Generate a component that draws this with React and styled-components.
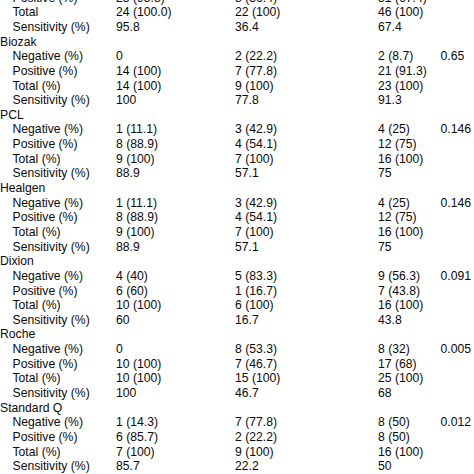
import React from "react";
import styled, { createGlobalStyle } from "styled-components";

const groups = [
  {
    name: null,
    rows: [
      { label: "Positive (%)", values: ["23 (95.8)", "8 (36.4)", "31 (67.4)"] },
      { label: "Total", values: ["24 (100.0)", "22 (100)", "46 (100)"] },
      { label: "Sensitivity (%)", values: ["95.8", "36.4", "67.4"] },
    ],
  },
  {
    name: "Biozak",
    p: "0.65",
    rows: [
      { label: "Negative (%)", values: ["0", "2 (22.2)", "2 (8.7)"] },
      { label: "Positive (%)", values: ["14 (100)", "7 (77.8)", "21 (91.3)"] },
      { label: "Total (%)", values: ["14 (100)", "9 (100)", "23 (100)"] },
      { label: "Sensitivity (%)", values: ["100", "77.8", "91.3"] },
    ],
  },
  {
    name: "PCL",
    p: "0.146",
    rows: [
      { label: "Negative (%)", values: ["1 (11.1)", "3 (42.9)", "4 (25)"] },
      { label: "Positive (%)", values: ["8 (88.9)", "4 (54.1)", "12 (75)"] },
      { label: "Total (%)", values: ["9 (100)", "7 (100)", "16 (100)"] },
      { label: "Sensitivity (%)", values: ["88.9", "57.1", "75"] },
    ],
  },
  {
    name: "Healgen",
    p: "0.146",
    rows: [
      { label: "Negative (%)", values: ["1 (11.1)", "3 (42.9)", "4 (25)"] },
      { label: "Positive (%)", values: ["8 (88.9)", "4 (54.1)", "12 (75)"] },
      { label: "Total (%)", values: ["9 (100)", "7 (100)", "16 (100)"] },
      { label: "Sensitivity (%)", values: ["88.9", "57.1", "75"] },
    ],
  },
  {
    name: "Dixion",
    p: "0.091",
    rows: [
      { label: "Negative (%)", values: ["4 (40)", "5 (83.3)", "9 (56.3)"] },
      { label: "Positive (%)", values: ["6 (60)", "1 (16.7)", "7 (43.8)"] },
      { label: "Total (%)", values: ["10 (100)", "6 (100)", "16 (100)"] },
      { label: "Sensitivity (%)", values: ["60", "16.7", "43.8"] },
    ],
  },
  {
    name: "Roche",
    p: "0.005",
    rows: [
      { label: "Negative (%)", values: ["0", "8 (53.3)", "8 (32)"] },
      { label: "Positive (%)", values: ["10 (100)", "7 (46.7)", "17 (68)"] },
      { label: "Total (%)", values: ["10 (100)", "15 (100)", "25 (100)"] },
      { label: "Sensitivity (%)", values: ["100", "46.7", "68"] },
    ],
  },
  {
    name: "Standard Q",
    p: "0.012",
    rows: [
      { label: "Negative (%)", values: ["1 (14.3)", "7 (77.8)", "8 (50)"] },
      { label: "Positive (%)", values: ["6 (85.7)", "2 (22.2)", "8 (50)"] },
      { label: "Total (%)", values: ["7 (100)", "9 (100)", "16 (100)"] },
      { label: "Sensitivity (%)", values: ["85.7", "22.2", "50"] },
    ],
  },
];

const App = () => {
  return (
    <>
      <GlobalStyle />
      <Table>
        {groups.map((group, gi) => (
          <React.Fragment key={gi}>
            {group.name && <GroupName>{group.name}</GroupName>}
            {group.rows.map((row, ri) => (
              <Row key={ri}>
                <Label>{row.label}</Label>
                {row.values.map((v, vi) => (
                  <Cell key={vi}>{v}</Cell>
                ))}
                <Cell>{ri === 0 && group.p ? group.p : ""}</Cell>
              </Row>
            ))}
          </React.Fragment>
        ))}
      </Table>
    </>
  );
};

const GlobalStyle = createGlobalStyle`
  html, body {
    margin: 0;
    padding: 0;
    background: #fff;
    overflow: hidden;
  }
`;

const Table = styled.div`
  width: 474px;
  margin-top: -9.3px;
  font-family: "Liberation Sans", Arial, sans-serif;
  font-size: 12.2px;
  line-height: 14.65px;
  color: #0a0a0a;
`;

const GroupName = styled.div`
  height: 14.65px;
  white-space: nowrap;
`;

const Row = styled.div`
  display: grid;
  grid-template-columns: 116px 119px 143px 62.5px 1fr;
  height: 14.65px;
  white-space: nowrap;
`;

const Label = styled.div`
  padding-left: 12.5px;
`;

const Cell = styled.div``;

export default App;
